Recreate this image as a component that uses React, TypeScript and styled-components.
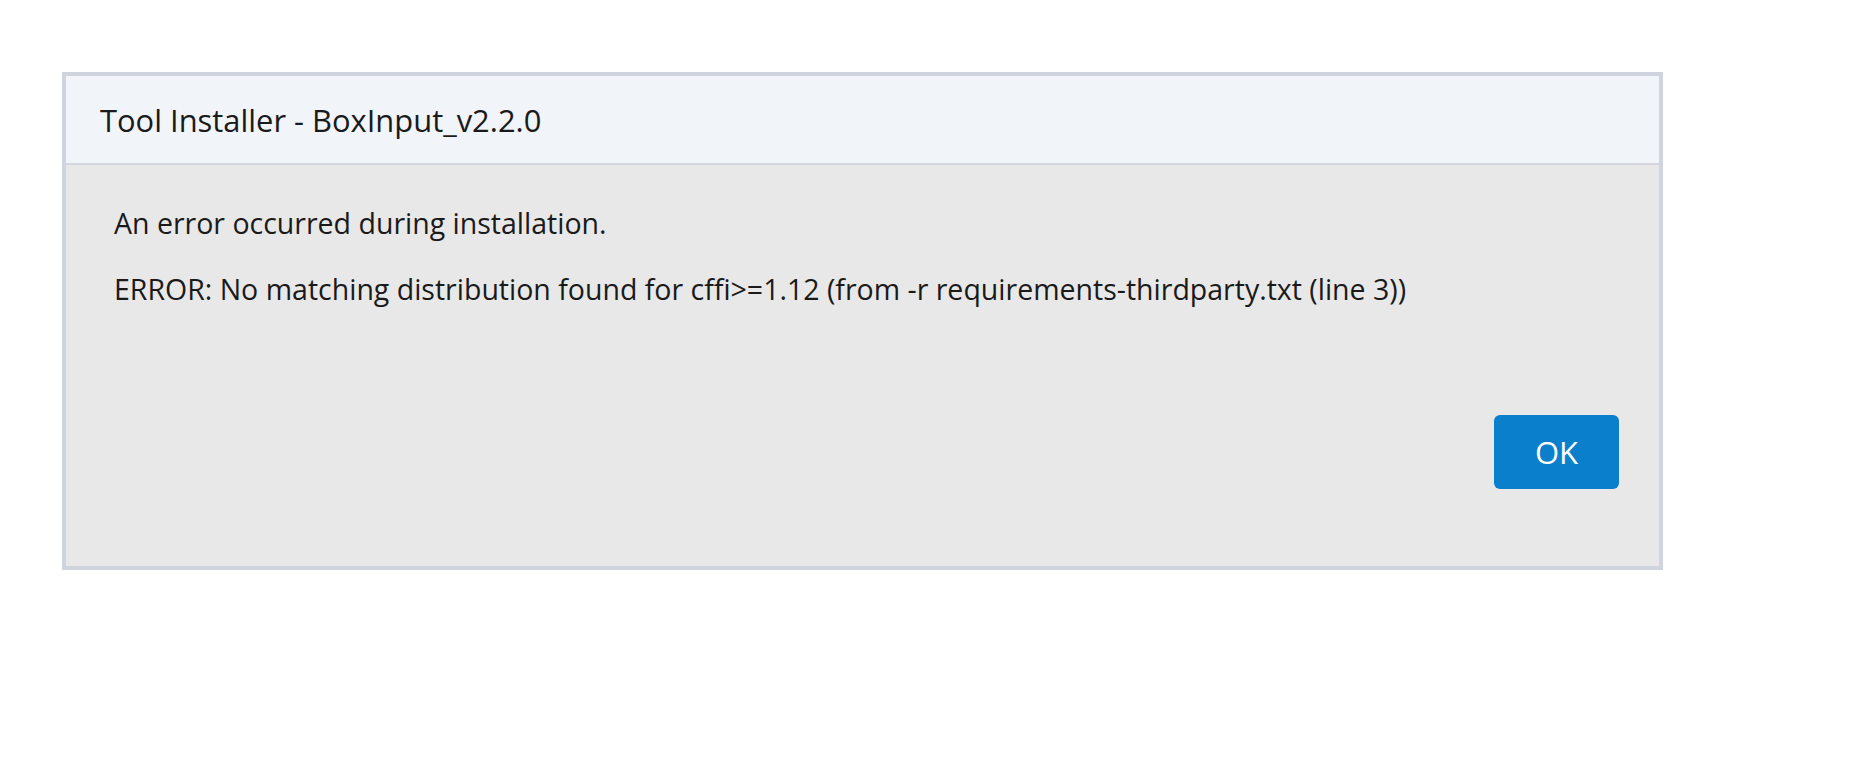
import React from "react";
import styled, { createGlobalStyle } from "styled-components";

const Global = createGlobalStyle`
  html, body { margin: 0; padding: 0; background: #ffffff; }
  body { font-family: "Open Sans", "Noto Sans", sans-serif; }
`;

const Page = styled.div`
  padding: 72px 0 0 62px;
`;

const Dialog = styled.div`
  width: 1601px;
  height: 498px;
  box-sizing: border-box;
  border: 4px solid #d0d4de;
  display: flex;
  flex-direction: column;
  background: #e8e8e8;
`;

const Header = styled.div`
  height: 89px;
  box-sizing: border-box;
  flex: none;
  display: flex;
  align-items: center;
  padding-left: 34px;
  background: #f1f4f9;
  border-bottom: 2px solid #d3d6de;
  font-size: 30.9px;
  color: #1a1a1a;
`;

const Body = styled.div`
  flex: 1;
  display: flex;
  flex-direction: column;
  padding: 40px 40px 0 48px;
`;

const Message = styled.p<{ $gap?: number }>`
  margin: 0 0 ${(p) => p.$gap ?? 0}px 0;
  font-size: 28.5px;
  line-height: 36px;
  color: #1a1a1a;
  white-space: nowrap;
`;

const Footer = styled.div`
  display: flex;
  justify-content: flex-end;
  margin-top: 108px;
`;

const OkButton = styled.button`
  width: 125px;
  height: 74px;
  border: none;
  border-radius: 6px;
  background: #0a7fcc;
  color: #ffffff;
  font-family: inherit;
  font-size: 31px;
  cursor: pointer;
`;

export default function App() {
  return (
    <>
      <Global />
      <Page>
        <Dialog>
          <Header>Tool Installer - BoxInput_v2.2.0</Header>
          <Body>
            <Message $gap={30}>An error occurred during installation.</Message>
            <Message>
              ERROR: No matching distribution found for cffi&gt;=1.12 (from -r requirements-thirdparty.txt (line 3))
            </Message>
            <Footer>
              <OkButton>OK</OkButton>
            </Footer>
          </Body>
        </Dialog>
      </Page>
    </>
  );
}
